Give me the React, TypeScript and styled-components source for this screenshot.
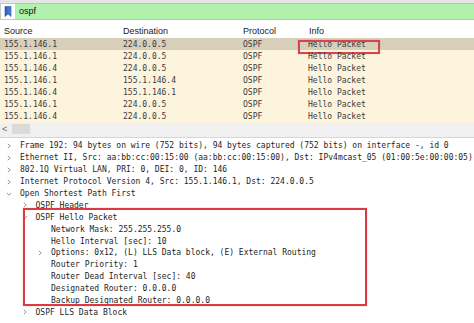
import React from "react";
import styled, { createGlobalStyle } from "styled-components";

const GlobalStyle = createGlobalStyle`
  html, body {
    margin: 0;
    padding: 0;
    background: #ffffff;
    overflow: hidden;
  }
`;

const Window = styled.div`
  width: 474px;
  height: 323px;
  display: flex;
  flex-direction: column;
  overflow: hidden;
  background: #ffffff;
`;

const TopStrip = styled.div`
  height: 3px;
  background: #e6e6e6;
`;

const FilterBar = styled.div`
  height: 17px;
  display: flex;
  align-items: stretch;
`;

const BookmarkBox = styled.div`
  width: 15px;
  display: flex;
  align-items: center;
  justify-content: center;
  background: #ffffff;
  border: 1px solid #c8c8c8;
  border-right: none;
  box-sizing: border-box;
`;

const FilterInput = styled.div`
  flex: 1;
  background: #b0f1ad;
  border-top: 1px solid #9ed89b;
  border-bottom: 1px solid #9ed89b;
  box-sizing: border-box;
  padding-left: 4px;
  font-family: "Liberation Sans", Arial, sans-serif;
  font-size: 9px;
  line-height: 15px;
  color: #111;
`;

const Columns = `
  display: grid;
  grid-template-columns: 119px 120px 66px 1fr;
`;

const HeaderRow = styled.div`
  ${Columns};
  height: 18px;
  align-items: center;
  font-family: "Liberation Sans", Arial, sans-serif;
  font-size: 9px;
  color: #222;
  background: #ffffff;
`;

const HeaderCell = styled.div`
  padding-left: 4px;
  padding-top: 3px;
`;

const PacketRow = styled.div<{ $selected?: boolean }>`
  ${Columns};
  height: 12px;
  align-items: center;
  font-family: "DejaVu Sans Mono", "Liberation Mono", monospace;
  font-size: 8px;
  color: #3a3a3a;
  background: ${(p) => (p.$selected ? "#d8cfbb" : "#fdf4dd")};
`;

const Cell = styled.div`
  padding-left: 4px;
  white-space: nowrap;
  position: relative;
`;

const InfoCell = styled(Cell)<{ $marked?: boolean }>`
  padding-left: 3px;
  &::after {
    content: "";
    display: ${(p) => (p.$marked ? "block" : "none")};
    position: absolute;
    left: -7px;
    top: 0px;
    width: 82px;
    height: 14px;
    border: 2px solid #d9434b;
    box-sizing: border-box;
    box-shadow: 0 0 1px rgba(217, 67, 75, 0.5);
  }
`;

const ListFill = styled.div`
  height: 1px;
  background: #fdf4dd;
`;

const ScrollBar = styled.div`
  height: 12px;
  display: flex;
  align-items: center;
  background: #f0f0f0;
  font-family: "Liberation Sans", Arial, sans-serif;
  font-size: 9px;
  color: #666;
`;

const ScrollArrow = styled.span`
  width: 10px;
  padding-left: 2px;
`;

const ScrollThumb = styled.div`
  width: 18px;
  height: 10px;
  background: #dadada;
`;

const Splitter = styled.div`
  height: 2px;
  background: #f0f0f0;
  border-bottom: 1px solid #d6d6d6;
`;

const DetailPane = styled.div`
  flex: 1;
  padding-top: 2px;
  font-family: "DejaVu Sans Mono", "Liberation Mono", monospace;
  font-size: 8px;
  color: #1e1e1e;
`;

const TreeRow = styled.div<{ $level: number }>`
  height: 11.9px;
  display: flex;
  align-items: center;
  padding-left: ${(p) => 4 + p.$level * 15.5}px;
  white-space: nowrap;
`;

const Toggle = styled.span`
  width: 16px;
  flex: none;
  display: flex;
  align-items: center;
  padding-left: 2px;
  box-sizing: border-box;
`;

const Highlight = styled.div`
  position: relative;
  &::after {
    content: "";
    position: absolute;
    left: 23px;
    top: -3px;
    width: 344px;
    bottom: 0;
    border: 2px solid #dc3a43;
    box-sizing: border-box;
    box-shadow: 0 0 1px rgba(220, 58, 67, 0.5);
  }
`;

const Bookmark = () => (
  <svg width="8" height="11" viewBox="0 0 8 11">
    <defs>
      <linearGradient id="bm" x1="0" x2="1">
        <stop offset="0" stopColor="#2a5fb8" />
        <stop offset="1" stopColor="#4f86d9" />
      </linearGradient>
    </defs>
    <path d="M1 0.5 H7 V10.5 L4 8 L1 10.5 Z" fill="url(#bm)" stroke="#244f9c" strokeWidth="0.6" />
  </svg>
);

const Chevron = ({ open }: { open?: boolean }) => (
  <svg width="6" height="6" viewBox="0 0 6 6">
    <path
      d={open ? "M0.8 1.8 L3 4.2 L5.2 1.8" : "M1.8 0.8 L4.2 3 L1.8 5.2"}
      fill="none"
      stroke="#8a8a8a"
      strokeWidth="0.9"
    />
  </svg>
);

type Packet = { src: string; dst: string; proto: string; info: string };

const packets: Packet[] = [
  { src: "155.1.146.1", dst: "224.0.0.5", proto: "OSPF", info: "Hello Packet" },
  { src: "155.1.146.1", dst: "224.0.0.5", proto: "OSPF", info: "Hello Packet" },
  { src: "155.1.146.4", dst: "224.0.0.5", proto: "OSPF", info: "Hello Packet" },
  { src: "155.1.146.1", dst: "155.1.146.4", proto: "OSPF", info: "Hello Packet" },
  { src: "155.1.146.4", dst: "155.1.146.1", proto: "OSPF", info: "Hello Packet" },
  { src: "155.1.146.1", dst: "224.0.0.5", proto: "OSPF", info: "Hello Packet" },
  { src: "155.1.146.4", dst: "224.0.0.5", proto: "OSPF", info: "Hello Packet" },
];

type Node = { level: number; text: string; toggle?: "open" | "closed" };

const topNodes: Node[] = [
  { level: 0, toggle: "closed", text: "Frame 192: 94 bytes on wire (752 bits), 94 bytes captured (752 bits) on interface -, id 0" },
  { level: 0, toggle: "closed", text: "Ethernet II, Src: aa:bb:cc:00:15:00 (aa:bb:cc:00:15:00), Dst: IPv4mcast_05 (01:00:5e:00:00:05)" },
  { level: 0, toggle: "closed", text: "802.1Q Virtual LAN, PRI: 0, DEI: 0, ID: 146" },
  { level: 0, toggle: "closed", text: "Internet Protocol Version 4, Src: 155.1.146.1, Dst: 224.0.0.5" },
  { level: 0, toggle: "open", text: "Open Shortest Path First" },
  { level: 1, toggle: "closed", text: "OSPF Header" },
];

const helloNodes: Node[] = [
  { level: 1, toggle: "open", text: "OSPF Hello Packet" },
  { level: 2, text: "Network Mask: 255.255.255.0" },
  { level: 2, text: "Hello Interval [sec]: 10" },
  { level: 2, toggle: "closed", text: "Options: 0x12, (L) LLS Data block, (E) External Routing" },
  { level: 2, text: "Router Priority: 1" },
  { level: 2, text: "Router Dead Interval [sec]: 40" },
  { level: 2, text: "Designated Router: 0.0.0.0" },
  { level: 2, text: "Backup Designated Router: 0.0.0.0" },
];

const tailNodes: Node[] = [{ level: 1, toggle: "closed", text: "OSPF LLS Data Block" }];

const TreeLine = ({ node }: { node: Node }) => (
  <TreeRow $level={node.level}>
    <Toggle>{node.toggle && <Chevron open={node.toggle === "open"} />}</Toggle>
    {node.text}
  </TreeRow>
);

const App = () => {
  return (
    <Window>
      <GlobalStyle />
      <TopStrip />
      <FilterBar>
        <BookmarkBox>
          <Bookmark />
        </BookmarkBox>
        <FilterInput>ospf</FilterInput>
      </FilterBar>
      <HeaderRow>
        <HeaderCell>Source</HeaderCell>
        <HeaderCell>Destination</HeaderCell>
        <HeaderCell>Protocol</HeaderCell>
        <HeaderCell>Info</HeaderCell>
      </HeaderRow>
      {packets.map((p, i) => (
        <PacketRow key={i} $selected={i === 0}>
          <Cell>{p.src}</Cell>
          <Cell>{p.dst}</Cell>
          <Cell>{p.proto}</Cell>
          <InfoCell $marked={i === 0}>{p.info}</InfoCell>
        </PacketRow>
      ))}
      <ListFill />
      <ScrollBar>
        <ScrollArrow>&lt;</ScrollArrow>
        <ScrollThumb />
      </ScrollBar>
      <Splitter />
      <DetailPane>
        {topNodes.map((n, i) => (
          <TreeLine key={i} node={n} />
        ))}
        <Highlight>
          {helloNodes.map((n, i) => (
            <TreeLine key={i} node={n} />
          ))}
        </Highlight>
        {tailNodes.map((n, i) => (
          <TreeLine key={i} node={n} />
        ))}
      </DetailPane>
    </Window>
  );
};

export default App;
